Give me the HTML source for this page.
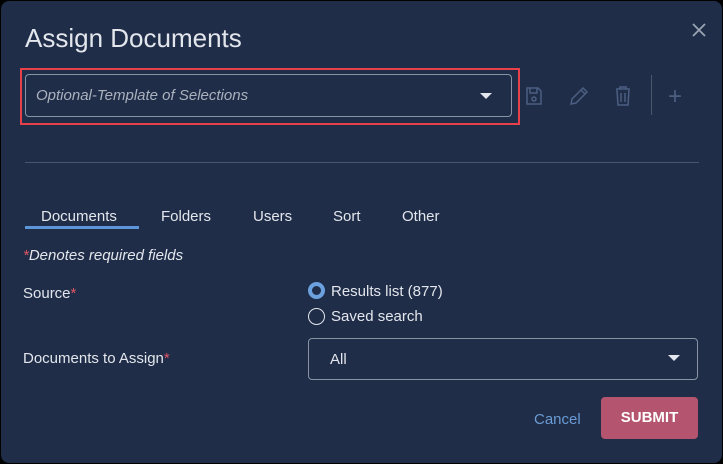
<!DOCTYPE html>
<html><head><style>
*{margin:0;padding:0;box-sizing:border-box}
body{width:723px;height:464px;background:#000;font-family:"Liberation Sans",sans-serif;overflow:hidden;position:relative}
.dlg{position:absolute;left:1px;top:1px;width:721px;height:462px;background:#1f2d48;border-radius:8px}
.a{position:absolute;white-space:nowrap}
.t{color:#e3e6ec}
</style></head><body>
<div class="dlg"></div>
<div class="a t" style="left:25px;top:23px;font-size:26px">Assign Documents</div>
<svg class="a" style="left:692px;top:23px" width="14" height="14" viewBox="0 0 14 14" stroke="#9aa3b2" stroke-width="1.8"><path d="M1 1L13 13M13 1L1 13"/></svg>
<div class="a" style="left:20px;top:68px;width:500px;height:57px;border:2px solid #e8404a"></div>
<div class="a" style="left:25px;top:74px;width:487px;height:43px;border:1px solid #8a93a3;border-radius:4px"></div>
<div class="a" style="left:36px;top:87px;font-size:15px;font-style:italic;color:#aab1bd">Optional-Template of Selections</div>
<div class="a" style="left:480px;top:93px;width:0;height:0;border-left:6px solid transparent;border-right:6px solid transparent;border-top:6px solid #e3e6ec"></div>
<svg class="a" style="left:525px;top:86px" width="18" height="20" viewBox="0 0 18 20" fill="none" stroke="#4c5f82" stroke-width="1.5"><path d="M2 2h11l3 3v13H2z"/><path d="M5 2v5h7V2"/><circle cx="9" cy="13" r="2"/></svg>
<svg class="a" style="left:568px;top:85px" width="22" height="22" viewBox="0 0 22 22" fill="none" stroke="#4c5f82" stroke-width="1.5"><path d="M3 19l1-5L15 3l4 4L8 18z M13 5l4 4"/></svg>
<svg class="a" style="left:614px;top:85px" width="18" height="22" viewBox="0 0 18 22" fill="none" stroke="#4c5f82" stroke-width="1.5"><path d="M2 4h14M6 4V2h6v2M3 5l1 15h10l1-15M7 8v9M11 8v9"/></svg>
<div class="a" style="left:651px;top:75px;width:1px;height:40px;background:#4a566b"></div>
<div class="a" style="left:668px;top:83px;font-size:24px;color:#4c5f82">+</div>
<div class="a" style="left:25px;top:162px;width:674px;height:1px;background:#4a566b"></div>
<div class="a t" style="left:41px;top:208px;font-size:15px">Documents</div>
<div class="a t" style="left:161px;top:208px;font-size:15px">Folders</div>
<div class="a t" style="left:253px;top:208px;font-size:15px">Users</div>
<div class="a t" style="left:333px;top:208px;font-size:15px">Sort</div>
<div class="a t" style="left:402px;top:208px;font-size:15px">Other</div>
<div class="a" style="left:25px;top:226px;width:114px;height:3px;background:#5d96d8"></div>
<div class="a t" style="left:23px;top:247px;font-size:15px;font-style:italic"><span style="color:#e05563">*</span>Denotes required fields</div>
<div class="a t" style="left:23px;top:285px;font-size:15px">Source<span style="color:#e05563">*</span></div>
<div class="a" style="left:308px;top:282px;width:17px;height:17px;border-radius:50%;border:4px solid #6ba1de;background:#1f2d48"></div>
<div class="a t" style="left:331px;top:283px;font-size:15px">Results list (877)</div>
<div class="a" style="left:308px;top:308px;width:17px;height:17px;border-radius:50%;border:1.5px solid #e3e6ec"></div>
<div class="a t" style="left:331px;top:308px;font-size:15px">Saved search</div>
<div class="a t" style="left:23px;top:350px;font-size:15px">Documents to Assign<span style="color:#e05563">*</span></div>
<div class="a" style="left:308px;top:338px;width:390px;height:42px;border:1px solid #8a93a3;border-radius:4px"></div>
<div class="a t" style="left:330px;top:351px;font-size:15px">All</div>
<div class="a" style="left:668px;top:355px;width:0;height:0;border-left:6px solid transparent;border-right:6px solid transparent;border-top:6px solid #e3e6ec"></div>
<div class="a" style="left:534px;top:411px;font-size:15px;color:#6a9bd4">Cancel</div>
<div class="a" style="left:601px;top:397px;width:97px;height:42px;background:#b5546f;border-radius:4px;color:#fff;font-weight:bold;font-size:15px;text-align:center;line-height:42px">SUBMIT</div>
</body></html>
